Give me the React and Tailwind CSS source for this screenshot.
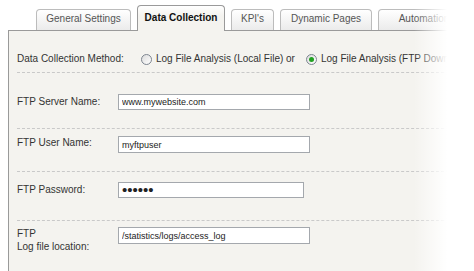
import { useState } from "react"

const tabs = [
  { label: "General Settings", w: "w-[95px]" },
  { label: "Data Collection", w: "w-[88px]", active: true },
  { label: "KPI's", w: "w-[43px]" },
  { label: "Dynamic Pages", w: "w-[92px]" },
  { label: "Automation", w: "w-[92px]" },
]

function Radio({ checked }) {
  return (
    <span className="w-[11px] h-[11px] rounded-full border border-[#7d8590] bg-gradient-to-br from-[#dcdcdc] to-white flex items-center justify-center shrink-0">
      {checked && <span className="w-[5px] h-[5px] rounded-full bg-[#21a121]"></span>}
    </span>
  )
}

function Field({ value, type = "text", width = "w-[192px]", height = "h-[17px]", size = "text-[9px]" }) {
  return (
    <input
      type={type}
      readOnly
      value={value}
      className={`${width} ${height} ${size} border border-[#a4a8ad] bg-white px-[3px] text-[#222] outline-none`}
      style={{ fontFamily: "'Liberation Sans', Arial, sans-serif" }}
    />
  )
}

export default function App() {
  const [method] = useState("ftp")

  return (
    <div
      className="relative h-[271px] w-[474px] overflow-hidden bg-white text-[10px] text-[#333]"
      style={{ fontFamily: "'Liberation Sans', Arial, sans-serif" }}
    >
      {/* tabs */}
      <div className="h-[30px] flex items-end pl-[36px] gap-[6px]">
        {tabs.map((tab) =>
          tab.active ? (
            <div
              key={tab.label}
              className={`${tab.w} relative z-10 -mb-px h-[26px] pt-[6px] leading-[12px] text-center font-bold text-[#111] border border-b-0 border-[#9a9a9a] rounded-t-[4px] bg-gradient-to-b from-white to-[#f4f3ef] to-40%`}
            >
              {tab.label}
            </div>
          ) : (
            <div
              key={tab.label}
              className={`${tab.w} h-[21px] pt-[3px] leading-[12px] text-center text-[#555] border border-b-0 border-[#bcbcbc] rounded-t-[4px] bg-gradient-to-b from-white to-[#ebebeb]`}
            >
              {tab.label}
            </div>
          )
        )}
      </div>

      {/* panel */}
      <div className="ml-[8px] h-[241px] border-l border-t border-[#9a9a9a] bg-[#f4f3ef] pl-[8px]">
        <div className="h-[42px] pt-[22px] flex items-start border-b border-dashed border-[#c9c9c9] leading-[12px]">
          <span className="w-[124px]">Data Collection Method:</span>
          <span className="flex items-center gap-[4px]">
            <Radio checked={method === "local"} />
            <span>Log File Analysis (Local File) or</span>
          </span>
          <span className="flex items-center gap-[4px] ml-[11px]">
            <Radio checked={method === "ftp"} />
            <span className="whitespace-nowrap">Log File Analysis (FTP Download)</span>
          </span>
        </div>

        <div className="h-[56px] pt-[21px] flex items-start border-b border-dashed border-[#c9c9c9]">
          <span className="w-[101px] pt-[2px] leading-[12px]">FTP Server Name:</span>
          <Field value="www.mywebsite.com" height="h-[16px]" />
        </div>

        <div className="h-[43px] pt-[7px] flex items-start border-b border-dashed border-[#c9c9c9]">
          <span className="w-[101px] pt-[1px] leading-[12px]">FTP User Name:</span>
          <Field value="myftpuser" />
        </div>

        <div className="h-[49px] pt-[10px] flex items-start border-b border-dashed border-[#c9c9c9]">
          <span className="w-[101px] pt-[2px] leading-[12px]">FTP Password:</span>
          <Field value="123456" type="password" width="w-[186px]" height="h-[16px]" size="text-[15px]" />
        </div>

        <div className="pt-[6px] flex items-start">
          <span className="w-[101px] leading-[13px]">
            FTP
            <br />
            Log file location:
          </span>
          <Field value="/statistics/logs/access_log" />
        </div>
      </div>

      {/* fade to white on the right */}
      <div className="absolute top-0 right-0 h-full w-[60px] bg-gradient-to-r from-transparent via-white via-55% to-white"></div>
    </div>
  )
}
